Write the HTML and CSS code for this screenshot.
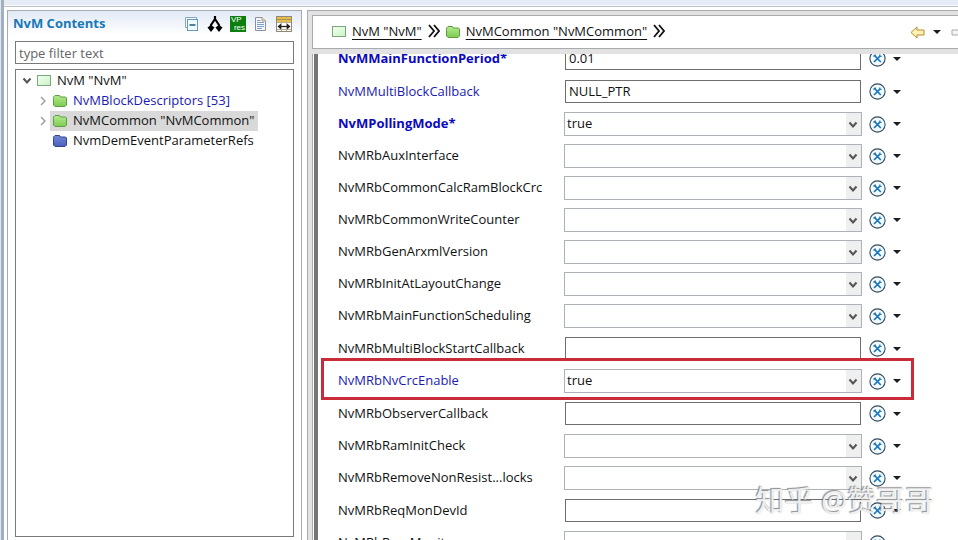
FILE: index.html
```html
<!DOCTYPE html>
<html lang="en">
<head>
<meta charset="utf-8">
<title>NvM Contents</title>
<link rel="stylesheet" href="styles.css">
</head>
<body>
<svg class="defs" aria-hidden="true">
  <defs>
    <linearGradient id="gGreen" x1="0" y1="0" x2="0" y2="1"><stop offset="0" stop-color="#b4ea8c"/><stop offset="1" stop-color="#7ccc52"/></linearGradient>
    <linearGradient id="gBlue" x1="0" y1="0" x2="0" y2="1"><stop offset="0" stop-color="#7288d8"/><stop offset="1" stop-color="#4a60bc"/></linearGradient>
    <linearGradient id="gBox" x1="0" y1="0" x2="1" y2="1"><stop offset="0" stop-color="#f4fff2"/><stop offset="1" stop-color="#c8f4c4"/></linearGradient>
    <symbol id="folder" viewBox="0 0 16 14"><path d="M1.500 4.500V11L3 12.500H13L14.500 11V4L13.500 3H8.500L7.500 1.500H3L1.500 3Z" stroke-width="1"/></symbol>
    <symbol id="module" viewBox="0 0 14 12"><rect x=".5" y=".5" width="13" height="10" fill="url(#gBox)" stroke="#7da67c"/></symbol>
    <symbol id="tools" viewBox="0 0 17 17"><circle cx="8.500" cy="8.500" r="7.600" fill="#f1fbff" stroke="#34495a" stroke-width="1.100"/><path d="M5.200 5.200L11.800 12M11.200 5.800L5 12" stroke="#1c78c0" stroke-width="1.700" fill="none"/><path d="M4.500 6.500L6.800 4.800M10.800 4.500V6.300H12.500" stroke="#1c78c0" stroke-width="1.200" fill="none"/></symbol>
    <symbol id="caret" viewBox="0 0 8 4"><path d="M0 0H8L4 4Z" fill="#1c1c1c"/></symbol>
    <symbol id="chev" viewBox="0 0 10 8"><path d="M1.500 1.500L5 5.500L8.500 1.500" fill="none" stroke="#555" stroke-width="2"/></symbol>
    <symbol id="right" viewBox="0 0 6 10"><path d="M1 1L5 5L1 9" fill="none" stroke="#a0a0a0" stroke-width="1.500"/></symbol>
    <symbol id="double" viewBox="0 0 12 14"><path d="M1 1L6 7L1 13M6 1L11 7L6 13" fill="none" stroke="#111" stroke-width="1.800"/></symbol>
  </defs>
</svg>
<div class="topstrip"></div>
<div class="workbench">
  <aside class="contents">
    <header class="contents-head">
      <h1>NvM Contents</h1>
      <div class="toolbar">
        <button aria-label="Collapse all"><svg width="16" height="16" viewBox="0 0 16 16"><path d="M3.500 11.500H1.500V1.500H12.500V3.500" fill="#f3f9fd" stroke="#82aac6"/><rect x="3.500" y="3.500" width="10" height="11" fill="#f0f9ff" stroke="#6898bb"/><path d="M5.500 9H11.500" stroke="#1c5680" stroke-width="1.500"/></svg></button>
        <button aria-label="Show hierarchy"><svg width="16" height="16" viewBox="0 0 16 16"><path d="M8 0V4M8 3L4 9V12M8 3L12 9V12" fill="none" stroke="#000" stroke-width="2.200"/><path d="M.5 11.500L4 9L7.500 11.500L4 16ZM8.500 11.500L12 9L15.500 11.500L12 16Z"/></svg></button>
        <button aria-label="VP res" class="vp"><span>VP</span><span class="res">res</span></button>
        <button aria-label="Document"><svg width="16" height="16" viewBox="0 0 16 16"><path d="M2.500 1.500H9L12.500 5V14.500H2.500Z" fill="#f6faff" stroke="#8c9098"/><path d="M9 1.500V5H12.500" fill="#e7d9a6" stroke="#a8a08c"/><path d="M4 4.500H7.500M4 6.500H11M4 8.500H11M4 10.500H11M4 12.500H9" stroke="#7b9bd2"/></svg></button>
        <button aria-label="Column width"><svg width="16" height="16" viewBox="0 0 16 16"><rect x=".5" y=".5" width="15" height="15" fill="#fff" stroke="#8e8878"/><path d="M1 1H15V6H1Z" fill="#ecc23c"/><path d="M1 3.500H15" stroke="#a58c40"/><path d="M5.500 1V15M10.500 1V15M1 6.500H15M1 13.500H15" stroke="#b5ad98"/><path d="M3 10.500H13" stroke="#222" stroke-width="1.300"/><path d="M1.500 10.500L5 7.500V13.500ZM14.500 10.500L11 7.500V13.500Z" fill="#222"/></svg></button>
      </div>
    </header>
    <input class="filter" type="text" placeholder="type filter text" aria-label="Filter">
    <ul class="tree">
      <li><svg class="twist open"><use href="#chev"/></svg><svg class="mod"><use href="#module"/></svg><span class="text">NvM "NvM"</span></li>
      <li class="child"><svg class="twist"><use href="#right"/></svg><span class="node blue"><svg class="fold green"><use href="#folder"/></svg><span class="text">NvMBlockDescriptors [53]</span></span></li>
      <li class="child"><svg class="twist"><use href="#right"/></svg><span class="node selected"><svg class="fold green"><use href="#folder"/></svg><span class="text">NvMCommon "NvMCommon"</span></span></li>
      <li class="child"><svg class="twist"></svg><span class="node"><svg class="fold navy"><use href="#folder"/></svg><span class="text">NvmDemEventParameterRefs</span></span></li>
    </ul>
  </aside>
  <main class="editor">
    <nav class="crumbs">
      <svg class="mod"><use href="#module"/></svg><a class="text" href="#">NvM "NvM"</a><svg class="dbl"><use href="#double"/></svg>
      <svg class="fold green"><use href="#folder"/></svg><a class="text" href="#">NvMCommon "NvMCommon"</a><svg class="dbl"><use href="#double"/></svg>
      <div class="history">
        <button aria-label="Back"><svg width="15" height="13" viewBox="0 0 15 13"><path d="M1 6.500L7 1V4H14V9H7V12Z" fill="#fff0b4" stroke="#b88a2c" stroke-linejoin="round"/></svg></button>
        <button aria-label="Back history"><svg class="caret"><use href="#caret"/></svg></button>
        <button aria-label="Forward" class="fwd"><svg width="15" height="13" viewBox="0 0 15 13"><path d="M14 6.500L8 1V4H1V9H8V12Z" fill="#f4f4f4" stroke="#aaa" stroke-linejoin="round"/></svg></button>
      </div>
    </nav>
    <div class="page">
      <form class="form" id="form"></form>
    </div>
  </main>
</div>
<div class="watermark">知乎 @赞哥哥</div>
<script src="form.js"></script>
</body>
</html>
```
FILE: styles.css
```css
* { box-sizing: border-box; }
body {
  margin: 0;
  height: 100vh;
  overflow: hidden;
  display: flex;
  flex-direction: column;
  padding-left: 4px;
  background: linear-gradient(90deg, #dfe8f0 1px, #a0b0be 1px 4px, #fff 4px);
  color: #111;
  font: 13px/20px "Open Sans", "Noto Sans CJK SC", sans-serif;
}
.defs { position: absolute; width: 0; height: 0; }
svg { display: block; flex: none; }
button { border: 0; padding: 0; background: none; display: block; font: inherit; }
input, select { font: inherit; color: inherit; border-radius: 0; outline: 0; }
.text { padding-bottom: 2px; line-height: 18px; }

.topstrip { flex: none; height: 7px; background: #e6ecf6; border-bottom: 1px solid #bcc2c8; box-shadow: inset 0 -1px #f8fafc; }
.workbench { flex: 1; min-height: 0; display: flex; gap: 5px; padding: 3px 0 0 3px; }

.contents {
  flex: none;
  width: 295px;
  display: flex;
  flex-direction: column;
  padding: 0 7px 3px;
  border: 1px solid #a8abae;
  border-bottom: 0;
  background: linear-gradient(#e1e9f5, #fff 24px);
}
.contents-head { display: flex; align-items: center; justify-content: space-between; height: 26px; padding-right: 2px; }
h1 { margin: 0 0 0 -2px; padding-bottom: 2px; font-size: 13px; line-height: 18px; color: #1878b8; }
.toolbar { display: flex; gap: 7px; }
.vp { width: 16px; height: 16px; background: #0b800f; color: #fff; font: 8px/8px "Liberation Sans", sans-serif; text-align: left; }
.vp span { display: block; padding-left: 1px; }
.vp .res { text-align: right; padding-right: 1px; }
.filter { height: 23px; margin-top: 4px; padding: 0 3px; border: 1px solid #7a7a7a; background: #fff; }
.filter::placeholder { color: #666; opacity: 1; }
.tree { flex: 1; margin: 5px 0 0; padding: 1px 6px; border: 1px solid #7a7a7a; background: #fff; list-style: none; }
.tree li { display: flex; align-items: center; height: 20px; white-space: nowrap; }
.tree li.child { padding-left: 18px; }
.twist { width: 6px; height: 10px; margin-right: 4px; }
.twist.open { width: 10px; height: 8px; margin-right: 5px; }
.mod { width: 14px; height: 12px; margin-right: 6px; }
.fold { width: 16px; height: 14px; margin-right: 5px; }
.green { fill: url(#gGreen); stroke: #5f9c48; }
.navy { fill: url(#gBlue); stroke: #34458a; }
.node { display: flex; align-items: center; height: 20px; padding: 0 4px 0 2px; }
.selected { background: #d9d9d9; }
.blue { color: #1a1ab4; }

.editor { flex: 1; min-width: 0; display: flex; flex-direction: column; border: solid #a8abae; border-width: 1px 0 0 1px; background: #e2e2e2; padding: 4px 0 0 4px; }
.crumbs { flex: none; display: flex; align-items: center; height: 34px; padding-left: 19px; border: solid #a8abae; border-width: 1px 0 1px 1px; background: #fff; white-space: nowrap; overflow: hidden; }
.crumbs a { color: #111; text-underline-offset: 3px; }
.dbl { width: 12px; height: 14px; margin: 0 5px 2px 6px; }
.history { display: flex; align-items: center; gap: 8px; margin-left: auto; margin-right: -8px; }
.fwd { margin-left: 2px; }
.page { flex: 1; min-height: 0; overflow: hidden; margin-top: 5px; background: #fff; border-left: 1px solid #a8abae; }
.page::before { content: ""; float: left; width: 4px; height: 100%; margin-left: 1px; background: #757575; }
.form { display: flex; flex-direction: column; gap: 8px; margin-top: -8px; padding-left: 20px; }
.row { position: relative; display: grid; grid-template-columns: 226px minmax(0, 298px) 25px 14px; align-items: center; flex: none; width: fit-content; }
.row label { padding-bottom: 2px; line-height: 18px; white-space: nowrap; }
.row.set label { color: #1a1ab4; }
.row.bold label { font-weight: 700; color: #0a0ac0; }
.field { position: relative; }
.field input { display: block; width: calc(100% - 2px); height: 23px; margin: 1px; padding: 0 3px 2px; border: 1px solid #6e6e6e; background: #fff; }
.field select { display: block; width: 100%; height: 24px; padding: 0 18px 5px 2px; border: 1px solid #adb2b8; background: linear-gradient(90deg, #fff, #fff) left / calc(100% - 15px) 100% no-repeat #efefef; appearance: none; }
.arrow { position: absolute; right: 4px; top: 9px; width: 10px; height: 8px; pointer-events: none; }
.tool { margin-left: 7px; }
.tool svg { width: 17px; height: 17px; }
.menu { margin-left: 6px; }
.caret { width: 8px; height: 4px; }
.marked::after { content: ""; position: absolute; z-index: 1; inset: -11px -13px -7px -17px; border: 3px solid #c92c38; pointer-events: none; }

.watermark { position: absolute; right: 24px; bottom: 20px; z-index: 2; font-size: 29px; line-height: 38px; color: rgba(255, 255, 255, .85); text-shadow: -1px -1px 1px rgba(110, 110, 110, .75), 0 0 1px rgba(120, 120, 120, .5); }
```
FILE: form.js
```js
const rows = [
  ["NvMMainFunctionPeriod*", "text", "0.01", "bold"],
  ["NvMMultiBlockCallback", "text", "NULL_PTR", "set"],
  ["NvMPollingMode*", "select", "true", "bold"],
  ["NvMRbAuxInterface", "select", "", ""],
  ["NvMRbCommonCalcRamBlockCrc", "select", "", ""],
  ["NvMRbCommonWriteCounter", "select", "", ""],
  ["NvMRbGenArxmlVersion", "select", "", ""],
  ["NvMRbInitAtLayoutChange", "select", "", ""],
  ["NvMRbMainFunctionScheduling", "select", "", ""],
  ["NvMRbMultiBlockStartCallback", "text", "", ""],
  ["NvMRbNvCrcEnable", "select", "true", "set marked"],
  ["NvMRbObserverCallback", "text", "", ""],
  ["NvMRbRamInitCheck", "select", "", ""],
  ["NvMRbRemoveNonResist...locks", "select", "", ""],
  ["NvMRbReqMonDevId", "text", "", ""],
  ["NvMRbRomMonitor", "select", "", ""]
];
document.getElementById("form").innerHTML = rows.map(([name, kind, value, cls], i) => `
  <div class="row ${cls}">
    <label for="f${i}">${name}</label>
    <div class="field">${kind === "text"
      ? `<input id="f${i}" type="text" value="${value}">`
      : `<select id="f${i}"><option>${value}</option></select><svg class="arrow"><use href="#chev"/></svg>`}</div>
    <button type="button" class="tool" aria-label="Edit ${name}"><svg><use href="#tools"/></svg></button>
    <button type="button" class="menu" aria-label="Menu ${name}"><svg class="caret"><use href="#caret"/></svg></button>
  </div>`).join("");
```
